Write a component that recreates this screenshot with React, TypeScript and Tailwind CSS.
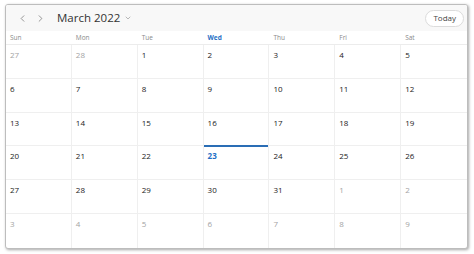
import { ChevronLeft, ChevronRight, ChevronDown } from "lucide-react";

const weekdays = ["Sun", "Mon", "Tue", "Wed", "Thu", "Fri", "Sat"];

type Day = { n: number; muted?: boolean; today?: boolean };

function buildDays(): Day[] {
  const days: Day[] = [{ n: 27, muted: true }, { n: 28, muted: true }];
  for (let i = 1; i <= 31; i++) days.push({ n: i, today: i === 23 });
  let next = 1;
  while (days.length < 42) days.push({ n: next++, muted: true });
  return days;
}

export default function App() {
  const days = buildDays();

  return (
    <div className="w-[474px] h-[254px] bg-white pl-[5px] pt-[4px]" style={{ fontFamily: '"Open Sans", "Noto Sans", sans-serif' }}>
      <div className="w-[463px] h-[245px] flex flex-col border border-[#bdbdbd] rounded-[3px] shadow-[1px_1px_3px_rgba(0,0,0,0.35)] overflow-hidden bg-white">
        <div className="h-[26px] shrink-0 flex items-center bg-[#f8f8f8] pl-[9px] pr-[3px]">
          <button className="w-[14px] h-[14px] flex items-center justify-center text-[#6b6b6b]">
            <ChevronLeft className="w-[11px] h-[11px]" strokeWidth={1.5} />
          </button>
          <button className="ml-[4px] w-[14px] h-[14px] flex items-center justify-center text-[#6b6b6b]">
            <ChevronRight className="w-[11px] h-[11px]" strokeWidth={1.5} />
          </button>
          <span className="ml-[10px] text-[11.5px] text-[#333]">March 2022</span>
          <ChevronDown className="ml-[4px] w-[8px] h-[8px] text-[#777]" strokeWidth={1.5} />
          <button className="ml-auto h-[17px] px-[7px] rounded-full border border-[#dcdcdc] bg-white text-[8px] text-[#444]">
            Today
          </button>
        </div>

        <div className="h-[14px] shrink-0 grid grid-cols-7 border-b border-[#ececec]">
          {weekdays.map((d) => (
            <div
              key={d}
              className={`pl-[4px] text-[6.5px] leading-[14px] ${d === "Wed" ? "text-[#1f6fc5] font-bold" : "text-[#8a8a8a]"}`}
            >
              {d}
            </div>
          ))}
        </div>

        <div className="flex-1 grid grid-cols-7 grid-rows-6">
          {days.map((d, i) => (
            <div
              key={i}
              className={`relative pl-[4px] pt-[6px] text-[8px] leading-none border-[#efefef] ${i % 7 !== 6 ? "border-r" : ""} ${i < 35 ? "border-b" : ""} ${
                d.today ? "text-[#1f6fc5] font-bold" : d.muted ? "text-[#a3a3a3]" : "text-[#222]"
              }`}
            >
              {d.today && <div className="absolute left-0 right-0 top-[-1px] h-[2px] bg-[#2a6db5]" />}
              {d.n}
            </div>
          ))}
        </div>
      </div>
    </div>
  );
}
